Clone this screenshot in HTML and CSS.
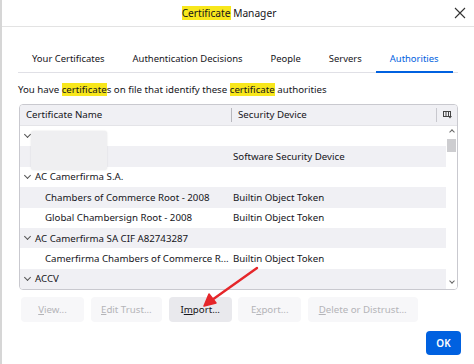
FILE: index.html
```html
<!DOCTYPE html>
<html>
<head>
<meta charset="utf-8">
<link rel="stylesheet" href="styles.css">
</head>
<body>
<div class="window">
  <div class="titlebar">
    <span class="title"><mark>Certificate</mark> Manager</span>
    <svg class="close" width="12" height="12" viewBox="0 0 12 12"><path d="M1 1L11 11M11 1L1 11" stroke="#333" stroke-width="1.1" fill="none"/></svg>
  </div>
  <div class="content">
    <div class="tabs">
      <div class="tab">Your Certificates</div>
      <div class="tab">Authentication Decisions</div>
      <div class="tab">People</div>
      <div class="tab">Servers</div>
      <div class="tab active">Authorities</div>
    </div>
    <p class="desc">You have <mark>certificate</mark>s on file that identify these <mark>certificate</mark> authorities</p>
    <div class="tree">
      <div class="thead">
        <div class="col1">Certificate Name</div>
        <div class="col2">Security Device</div>
        <div class="picker">
          <svg width="9" height="8" viewBox="0 0 9 8"><rect x="0.5" y="0.5" width="7" height="5" fill="none" stroke="#444" stroke-width="1"/><path d="M3 0.5V5.5M5.5 0.5V5.5" stroke="#444" stroke-width="1"/><path d="M5 5L7 7.5L9 5Z" fill="#444"/></svg>
        </div>
      </div>
      <div class="tbody">
        <div class="rows">
          <div class="row"><div class="col1 grp"><span class="chev"></span></div><div class="col2"></div></div>
          <div class="row alt"><div class="col1 child"></div><div class="col2">Software Security Device</div></div>
          <div class="row"><div class="col1 grp"><span class="chev"></span>AC Camerfirma S.A.</div><div class="col2"></div></div>
          <div class="row alt"><div class="col1 child">Chambers of Commerce Root - 2008</div><div class="col2">Builtin Object Token</div></div>
          <div class="row"><div class="col1 child">Global Chambersign Root - 2008</div><div class="col2">Builtin Object Token</div></div>
          <div class="row alt"><div class="col1 grp"><span class="chev"></span>AC Camerfirma SA CIF A82743287</div><div class="col2"></div></div>
          <div class="row"><div class="col1 child">Camerfirma Chambers of Commerce R...</div><div class="col2">Builtin Object Token</div></div>
          <div class="row alt"><div class="col1 grp"><span class="chev"></span>ACCV</div><div class="col2"></div></div>
        </div>
        <div class="scrollbar">
          <span class="sb-up"></span>
          <span class="sb-thumb"></span>
          <span class="sb-fill"></span>
          <span class="sb-down"></span>
        </div>
      </div>
    </div>
    <div class="actions">
      <button class="btn disabled"><u>V</u>iew...</button>
      <button class="btn disabled"><u>E</u>dit Trust...</button>
      <button class="btn">I<u>m</u>port...</button>
      <button class="btn disabled">E<u>x</u>port...</button>
      <button class="btn disabled wide"><u>D</u>elete or Distrust...</button>
    </div>
    <div class="footer">
      <button class="ok">OK</button>
    </div>
  </div>
  <div class="redact"></div>
  <svg class="arrow" width="474" height="364" viewBox="0 0 474 364">
    <line x1="257" y1="268" x2="212" y2="300" stroke="#e5262a" stroke-width="2.4" stroke-linecap="round"/>
    <path d="M204 306L209 294L216 303Z" fill="#e5262a" stroke="#e5262a" stroke-width="1.5" stroke-linejoin="round"/>
  </svg>
</div>
</body>
</html>
```
FILE: styles.css
```css
* { box-sizing: border-box; }
body {
  margin: 0;
  background: #fff;
  font-family: "Noto Sans", "Open Sans", sans-serif;
  font-size: 9.7px;
  color: #15141a;
}
.window {
  position: relative;
  width: 474px;
  height: 364px;
  border-left: 2px solid #d6d6d6;
  overflow: hidden;
}
mark {
  background: #f8e71c;
  color: inherit;
}
.titlebar {
  height: 27px;
  border-bottom: 1px solid #e3e3e3;
  display: flex;
  align-items: center;
  justify-content: center;
  position: relative;
}
.title {
  font-size: 10.2px;
  line-height: 15px;
  margin-left: -18px;
}
.close {
  position: absolute;
  right: 8px;
  top: 7px;
}
.content {
  padding: 0 14px 0 16px;
}
.tabs {
  display: flex;
  margin-top: 18px;
  border-bottom: 1px solid #e0e0e6;
  width: 440px;
}
.tab {
  height: 28px;
  line-height: 28px;
  padding: 0 14px;
  font-size: 9.45px;
  border-bottom: 2px solid transparent;
  margin-bottom: -1px;
  white-space: nowrap;
  flex-shrink: 0;
}
.tab.active {
  color: #0061e0;
  border-bottom-color: #0061e0;
}
.desc {
  margin: 9px 0 0;
  line-height: 16px;
  white-space: nowrap;
}
.tree {
  margin: 6px 0 0 1px;
  width: 439px;
  border: 1px solid #c9c9cf;
  border-radius: 4px;
  overflow: hidden;
}
.thead {
  display: flex;
  height: 21px;
  background: #f0f0f4;
  border-bottom: 1px solid #e4e4e8;
  align-items: center;
}
.thead .col1 {
  width: 212px;
  padding-left: 6px;
  border-right: 1px solid #b8b8be;
  line-height: 14px;
}
.thead .col2 {
  width: 205px;
  padding-left: 6px;
  border-right: 1px solid #c8c8ce;
  line-height: 14px;
}
.picker {
  flex: 1;
  display: flex;
  justify-content: center;
  align-items: center;
}
.tbody {
  display: flex;
  height: 163px;
}
.rows {
  flex: 1;
}
.row {
  display: flex;
  height: 20.4px;
  align-items: center;
  background: #fff;
  white-space: nowrap;
}
.row.alt {
  background: #f0f0f4;
}
.row .col1 {
  width: 212px;
  flex-shrink: 0;
}
.row .col2 {
  padding-left: 1px;
}
.grp {
  padding-left: 3px;
  display: flex;
  align-items: center;
}
.child {
  padding-left: 25px;
}
.chev {
  display: inline-block;
  width: 5px;
  height: 5px;
  border-right: 1px solid #555;
  border-bottom: 1px solid #555;
  transform: rotate(45deg);
  margin: -3px 5px 0 2px;
}
.scrollbar {
  width: 11px;
  display: flex;
  flex-direction: column;
  align-items: center;
  background: #fff;
}
.sb-up, .sb-down {
  display: block;
  width: 4px;
  height: 4px;
  border-left: 1px solid #666;
  border-top: 1px solid #666;
  transform: rotate(45deg);
}
.sb-up { margin-top: 4px; }
.sb-down { transform: rotate(225deg); margin-bottom: 6px; }
.sb-thumb {
  display: block;
  width: 9px;
  height: 13px;
  background: #cdcdd0;
  margin-top: 5px;
}
.sb-fill { flex: 1; }
.actions {
  display: flex;
  gap: 6.5px;
  margin: 7px 0 0 3px;
}
.btn {
  font: inherit;
  height: 25px;
  min-width: 63px;
  border: none;
  border-radius: 4px;
  padding: 0 10.5px;
  background: #e9e9ed;
  color: #15141a;
  white-space: nowrap;
  flex-shrink: 0;
}
.btn.wide {
  min-width: 110px;
}
.btn.disabled {
  background: #f7f7f9;
  color: #b4b4b8;
}
.footer {
  display: flex;
  justify-content: flex-end;
  margin-top: 9px;
}
.ok {
  font: inherit;
  font-weight: 600;
  font-size: 10px;
  width: 35px;
  height: 24px;
  border: none;
  border-radius: 4px;
  background: #0061e0;
  color: #fff;
  padding: 0;
  margin-right: -1px;
}
.redact {
  position: absolute;
  left: 29px;
  top: 131px;
  width: 76px;
  height: 39px;
  background: #efeff1;
  border-radius: 3px;
  box-shadow: 0 0 2px rgba(0,0,0,0.12);
}
.arrow {
  position: absolute;
  left: -2px;
  top: 0;
  pointer-events: none;
}
```
